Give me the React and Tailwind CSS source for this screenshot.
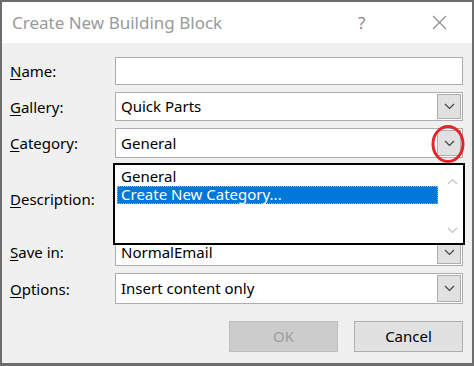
import { useState } from 'react'

const FONT = { fontFamily: '"Noto Sans", "Open Sans", sans-serif' }

function Label({ k, rest }) {
  return (
    <span className="text-[15px] text-black">
      <span className="underline underline-offset-2">{k}</span>
      {rest}
    </span>
  )
}

function Chevron({ className = '' }) {
  return (
    <svg width="11" height="7" viewBox="0 0 11 7" className={className}>
      <path d="M1 1l4.5 4.5L10 1" fill="none" stroke="currentColor" strokeWidth="1.2" />
    </svg>
  )
}

function Combo({ value, h = 'h-[29px]' }) {
  return (
    <div className={`flex ${h} flex-1 items-center border border-[#adadad] bg-white pl-[5px] pr-[1px]`}>
      <span className="flex-1 text-[15px] text-black">{value}</span>
      <div className="flex h-[calc(100%-2px)] w-[24px] items-center justify-center border border-[#adadad] bg-[#e1e1e1] text-[#444]">
        <Chevron />
      </div>
    </div>
  )
}

export default function App() {
  const [selected] = useState(1)

  return (
    <div className="flex h-[366px] w-[474px] flex-col border-2 border-b-[3px] border-[#6d6d6d] bg-[#f0f0f0]" style={FONT}>
      <div className="flex h-[41px] items-center bg-white pl-[10px]">
        <span className="flex-1 text-[17px] text-[#9a9a9a]">Create New Building Block</span>
        <span className="w-[68px] text-[17px] text-[#8a8a8a]">?</span>
        <div className="mr-[20px] flex h-[41px] w-[26px] items-center justify-center text-[#8a8a8a]">
          <svg width="15" height="15" viewBox="0 0 15 15">
            <path d="M1 1l13 13M14 1L1 14" stroke="currentColor" strokeWidth="1.1" />
          </svg>
        </div>
      </div>

      <div className="relative flex flex-1 flex-col pl-[8px] pr-[9px] pt-[14px]">
        <div className="flex items-center">
          <div className="w-[105px]"><Label k="N" rest="ame:" /></div>
          <div className="flex h-[28px] flex-1 border border-[#adadad] bg-white" />
        </div>

        <div className="mt-[7px] flex items-center">
          <div className="w-[105px]"><Label k="G" rest="allery:" /></div>
          <Combo value="Quick Parts" />
        </div>

        <div className="mt-[7px] flex items-center">
          <div className="w-[105px]"><Label k="C" rest="ategory:" /></div>
          <Combo value="General" h="h-[30px]" />
        </div>

        <div className="mt-[6px] flex h-[69px] items-center">
          <div className="w-[105px]"><Label k="D" rest="escription:" /></div>
          <div className="h-full flex-1 border border-[#adadad] bg-white" />
        </div>

        <div className="mt-[5px] flex items-center">
          <div className="w-[105px]"><Label k="S" rest="ave in:" /></div>
          <Combo value="NormalEmail" h="h-[28px]" />
        </div>

        <div className="mt-[7px] flex items-center">
          <div className="w-[105px]"><Label k="O" rest="ptions:" /></div>
          <Combo value="Insert content only" h="h-[31px]" />
        </div>

        <div className="mt-[17px] flex justify-end gap-[16px]">
          <button className="h-[31px] w-[109px] border border-[#bfbfbf] bg-[#cccccc] text-[15px] text-[#9d9d9d]">OK</button>
          <button className="h-[31px] w-[109px] border border-[#adadad] bg-[#e1e1e1] text-[15px] text-black">Cancel</button>
        </div>

        {/* open category list */}
        <div className="absolute left-[111px] top-[120px] flex h-[82px] w-[352px] border-2 border-black bg-white">
          <div className="flex flex-1 flex-col pl-[2px] pt-[1px]">
            <div className="h-[20px] pl-[4px] text-[15px] leading-[20px] text-black">General</div>
            <div
              className={`h-[18px] w-[321px] border border-dotted border-[#8fb8e6] pl-[3px] text-[15px] leading-[15px] ${
                selected === 1 ? 'bg-[#0078d7] text-white' : 'text-black'
              }`}
            >
              Create New Category...
            </div>
          </div>
          <div className="flex w-[22px] flex-col items-center justify-between pb-[9px] pt-[13px] text-[#c0c0c0]">
            <Chevron className="rotate-180" />
            <Chevron />
          </div>
        </div>

        {/* red highlight circle */}
        <svg className="pointer-events-none absolute left-[428px] top-[81px]" width="36" height="40" viewBox="0 0 36 40">
          <ellipse cx="18" cy="20" rx="15" ry="17.5" fill="none" stroke="#e5232b" strokeWidth="3" />
        </svg>
      </div>
    </div>
  )
}
